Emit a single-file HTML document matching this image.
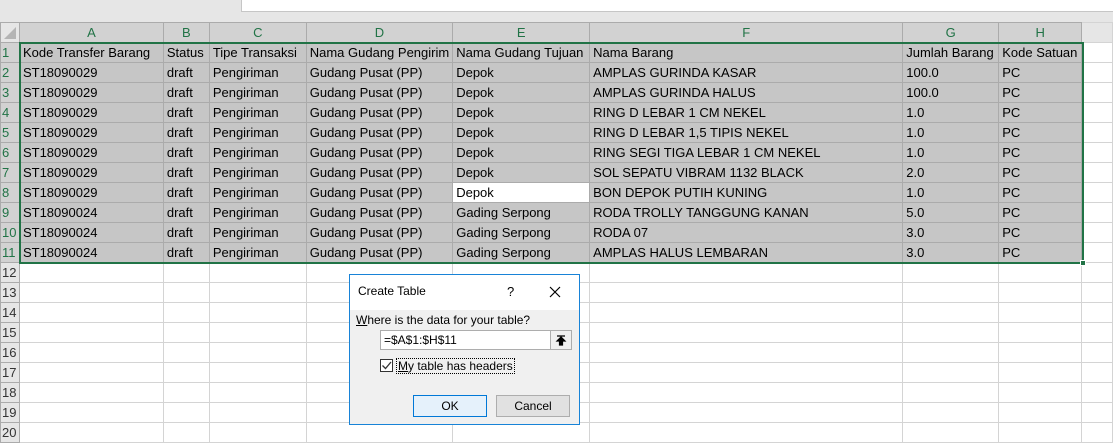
<!DOCTYPE html>
<html><head><style>
*{margin:0;padding:0;box-sizing:border-box}
body{width:1113px;height:435px;overflow:hidden;background:#fff;font-family:"Comic Sans MS","Liberation Sans",sans-serif;font-size:13px;position:relative}
.top{position:absolute;left:0;top:0;width:1113px;height:22px;background:#e6e6e6}
.wb{position:absolute;left:241px;top:0;width:872px;height:12px;background:#fff;border-left:1px solid #c6c6c6;border-bottom:1px solid #c6c6c6}
table{position:absolute;left:0;top:22px;border-collapse:collapse;table-layout:fixed}
td{height:20px;border:1px solid #d4d4d4;padding:0 3px;white-space:nowrap;overflow:hidden;color:#000;line-height:18px}
tr.h td{background:#d2d2d2;color:#217346;text-align:center;border-color:#ababab}
td.rh{background:#e6e6e6;color:#333;padding:0 0 0 1px;border-color:#ababab;font-size:13px}
tr.s td{background:#c6c6c6;border-color:#ababab}
tr.s td.rh{background:#d2d2d2;color:#217346}
tr.s td.e{background:#fff}
td.x{background:#fff!important;border-color:#d4d4d4!important}
.sel{position:absolute;left:19px;top:42px;width:1065px;height:222px;border:2px solid #217346}
.hnd{position:absolute;left:1080px;top:260px;width:6px;height:6px;background:#217346;border:1px solid #fff}
.dlg{position:absolute;left:349px;top:274px;width:231px;height:151px;background:#f0f0f0;border:1px solid #1883d7;font-family:"Liberation Sans",sans-serif;font-size:12px}
.tb{height:35px;background:#fff;position:relative}
.tb span{position:absolute;top:9px}
</style></head><body>
<div class="top"></div><div class="wb"></div>
<table>
<colgroup><col style="width:19px"><col style="width:144px"><col style="width:46px"><col style="width:97px"><col style="width:146px"><col style="width:137px"><col style="width:314px"><col style="width:96px"><col style="width:83px"><col style="width:31px"></colgroup>
<tr class="h"><td class="rh" style="background:#e6e6e6;position:relative"><svg width="14" height="14" style="position:absolute;right:2px;bottom:2px"><path d="M13 1L13 13L1 13Z" fill="#b4b4b4"/></svg></td><td>A</td><td>B</td><td>C</td><td>D</td><td>E</td><td>F</td><td>G</td><td>H</td><td class="x" style="background:#e6e6e6!important"></td></tr>
<tr class="s"><td class="rh">1</td><td>Kode Transfer Barang</td><td>Status</td><td>Tipe Transaksi</td><td>Nama Gudang Pengirim</td><td>Nama Gudang Tujuan</td><td>Nama Barang</td><td>Jumlah Barang</td><td>Kode Satuan</td><td class="x"></td></tr>
<tr class="s"><td class="rh">2</td><td>ST18090029</td><td>draft</td><td>Pengiriman</td><td>Gudang Pusat (PP)</td><td>Depok</td><td>AMPLAS GURINDA KASAR</td><td>100.0</td><td>PC</td><td class="x"></td></tr>
<tr class="s"><td class="rh">3</td><td>ST18090029</td><td>draft</td><td>Pengiriman</td><td>Gudang Pusat (PP)</td><td>Depok</td><td>AMPLAS GURINDA HALUS</td><td>100.0</td><td>PC</td><td class="x"></td></tr>
<tr class="s"><td class="rh">4</td><td>ST18090029</td><td>draft</td><td>Pengiriman</td><td>Gudang Pusat (PP)</td><td>Depok</td><td>RING D LEBAR 1 CM NEKEL</td><td>1.0</td><td>PC</td><td class="x"></td></tr>
<tr class="s"><td class="rh">5</td><td>ST18090029</td><td>draft</td><td>Pengiriman</td><td>Gudang Pusat (PP)</td><td>Depok</td><td>RING D LEBAR 1,5 TIPIS NEKEL</td><td>1.0</td><td>PC</td><td class="x"></td></tr>
<tr class="s"><td class="rh">6</td><td>ST18090029</td><td>draft</td><td>Pengiriman</td><td>Gudang Pusat (PP)</td><td>Depok</td><td>RING SEGI TIGA LEBAR 1 CM NEKEL</td><td>1.0</td><td>PC</td><td class="x"></td></tr>
<tr class="s"><td class="rh">7</td><td>ST18090029</td><td>draft</td><td>Pengiriman</td><td>Gudang Pusat (PP)</td><td>Depok</td><td>SOL SEPATU VIBRAM 1132 BLACK</td><td>2.0</td><td>PC</td><td class="x"></td></tr>
<tr class="s"><td class="rh">8</td><td>ST18090029</td><td>draft</td><td>Pengiriman</td><td>Gudang Pusat (PP)</td><td class="e">Depok</td><td>BON DEPOK PUTIH KUNING</td><td>1.0</td><td>PC</td><td class="x"></td></tr>
<tr class="s"><td class="rh">9</td><td>ST18090024</td><td>draft</td><td>Pengiriman</td><td>Gudang Pusat (PP)</td><td>Gading Serpong</td><td>RODA TROLLY TANGGUNG KANAN</td><td>5.0</td><td>PC</td><td class="x"></td></tr>
<tr class="s"><td class="rh">10</td><td>ST18090024</td><td>draft</td><td>Pengiriman</td><td>Gudang Pusat (PP)</td><td>Gading Serpong</td><td>RODA 07</td><td>3.0</td><td>PC</td><td class="x"></td></tr>
<tr class="s"><td class="rh">11</td><td>ST18090024</td><td>draft</td><td>Pengiriman</td><td>Gudang Pusat (PP)</td><td>Gading Serpong</td><td>AMPLAS HALUS LEMBARAN</td><td>3.0</td><td>PC</td><td class="x"></td></tr>
<tr><td class="rh">12</td><td></td><td></td><td></td><td></td><td></td><td></td><td></td><td></td><td></td></tr>
<tr><td class="rh">13</td><td></td><td></td><td></td><td></td><td></td><td></td><td></td><td></td><td></td></tr>
<tr><td class="rh">14</td><td></td><td></td><td></td><td></td><td></td><td></td><td></td><td></td><td></td></tr>
<tr><td class="rh">15</td><td></td><td></td><td></td><td></td><td></td><td></td><td></td><td></td><td></td></tr>
<tr><td class="rh">16</td><td></td><td></td><td></td><td></td><td></td><td></td><td></td><td></td><td></td></tr>
<tr><td class="rh">17</td><td></td><td></td><td></td><td></td><td></td><td></td><td></td><td></td><td></td></tr>
<tr><td class="rh">18</td><td></td><td></td><td></td><td></td><td></td><td></td><td></td><td></td><td></td></tr>
<tr><td class="rh">19</td><td></td><td></td><td></td><td></td><td></td><td></td><td></td><td></td><td></td></tr>
<tr><td class="rh">20</td><td></td><td></td><td></td><td></td><td></td><td></td><td></td><td></td><td></td></tr>
</table>
<div class="sel"></div><div class="hnd"></div>
<div class="dlg">
 <div class="tb"><span style="left:8px">Create Table</span><span style="left:157px;font-size:13px">?</span>
  <svg style="position:absolute;left:199px;top:11px" width="12" height="12"><path d="M1 1L11 11M11 1L1 11" stroke="#000" stroke-width="1.2"/></svg></div>
 <div style="position:absolute;left:6px;top:38px"><u>W</u>here is the data for your table?</div>
 <div style="position:absolute;left:30px;top:55px;width:192px;height:20px;background:#fff;border:1px solid #adadad">
  <span style="position:absolute;left:3px;top:2px">=$A$1:$H$11</span>
  <div style="position:absolute;right:0;top:0;width:21px;height:18px;background:#f0f0f0;border-left:1px solid #adadad">
   <svg width="20" height="18"><path d="M6 5H14M10 6L6 10H8.5V14H11.5V10H14Z" stroke="#000" stroke-width="1.2" fill="#000"/></svg></div>
 </div>
 <div style="position:absolute;left:30px;top:84px;width:13px;height:13px;background:#fff;border:1px solid #333"><svg width="11" height="11" style="position:absolute;left:0;top:0"><path d="M1.5 5.5L4.5 8.5L10 2" stroke="#333" stroke-width="1.3" fill="none"/></svg></div>
 <div style="position:absolute;left:46px;top:83px;border:1px dotted #000;padding:0 1px"><u>M</u>y table has headers</div>
 <div style="position:absolute;left:63px;top:120px;width:74px;height:22px;background:#e5f1fb;border:1px solid #0078d7;text-align:center;line-height:20px">OK</div>
 <div style="position:absolute;left:146px;top:120px;width:74px;height:22px;background:#e1e1e1;border:1px solid #adadad;text-align:center;line-height:20px">Cancel</div>
</div>
</body></html>
